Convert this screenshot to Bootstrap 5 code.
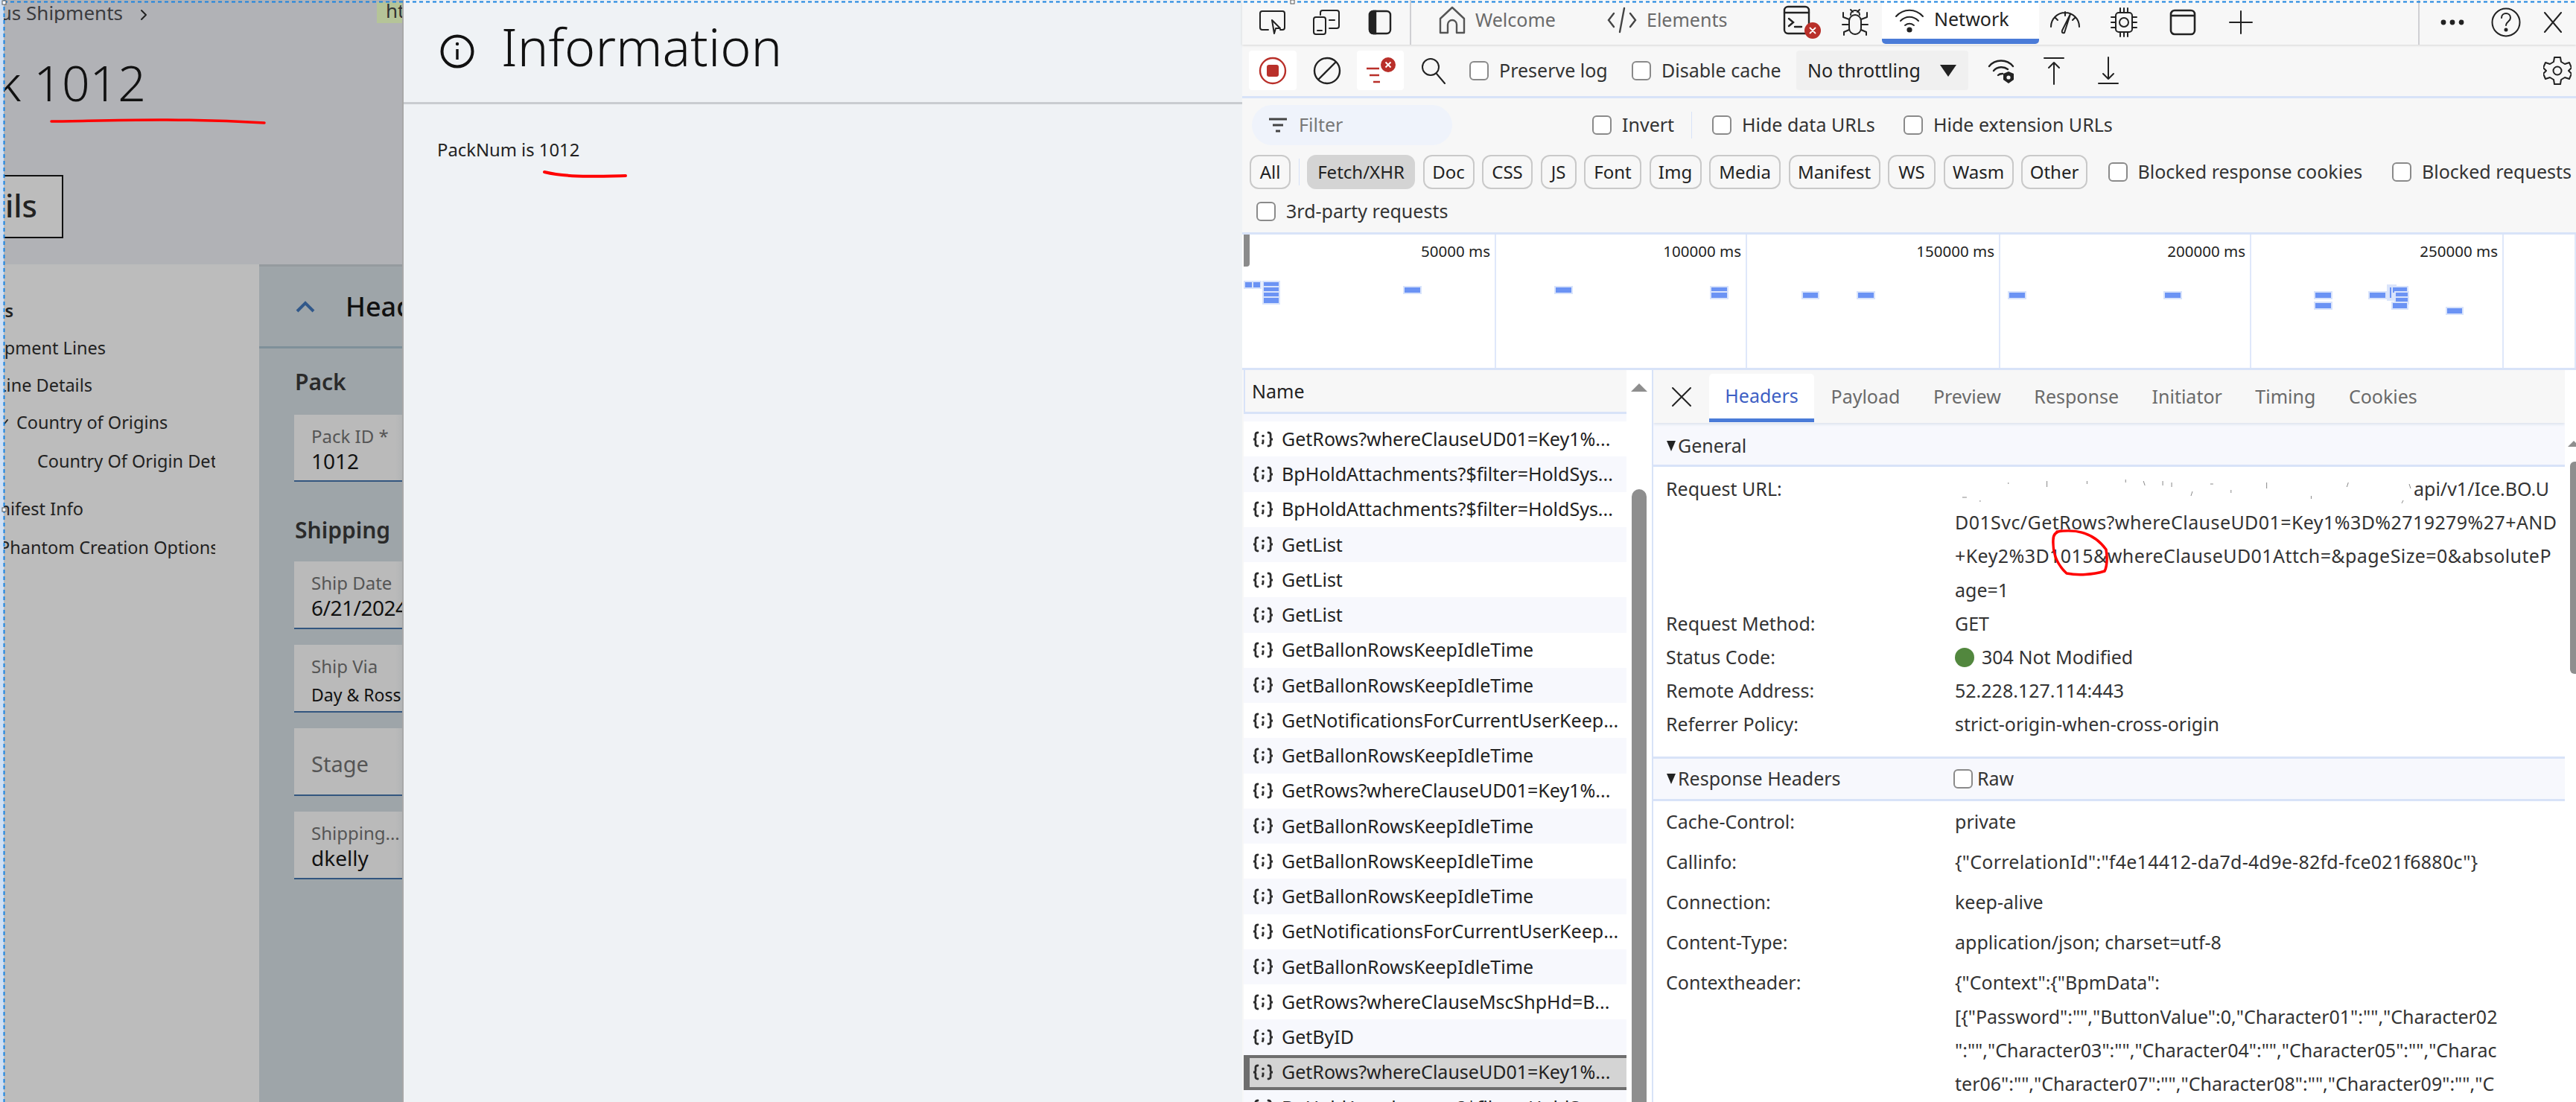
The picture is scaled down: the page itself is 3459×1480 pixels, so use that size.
<!DOCTYPE html>
<html lang="en">
<head>
<meta charset="UTF-8" />
<title>Pack 1012 - Network</title>
<link href="https://cdn.jsdelivr.net/npm/bootstrap@5.3.0/dist/css/bootstrap.min.css" rel="stylesheet" />
<style>
  html, body { height: 100%; }
  body { width: 3459px; height: 1480px; overflow: hidden; position: relative; font-family: "Noto Sans", sans-serif; font-size: 25px; color: #222; background: #f7f7f7; }
  svg { display: block; flex: none; }
  .ico { fill: none; stroke: #222; stroke-width: 2; stroke-linecap: round; stroke-linejoin: round; }
  .defs-svg { position: absolute; }

  /* left app pane */
  .app-pane { width: 540px; flex: none; background: #b1b2b6; overflow: hidden; }
  .crumb-row { height: 34px; padding-top: 3px; }
  .crumb-txt { width: 165px; color: #3b3b3e; font-size: 26px; line-height: 28px; white-space: nowrap; justify-content: flex-end; overflow: hidden; }
  .crumb-chev { margin: 9px 0 0 23px; }
  .crumb-url { margin-left: auto; width: 34px; height: 28px; background: #b5c498; padding-left: 12px; line-height: 22px; font-size: 26px; overflow: hidden; color: #333; }
  .pack-title { width: 196px; margin-top: 36px; font-size: 66px; line-height: 80px; font-weight: 300; color: #111; justify-content: flex-end; white-space: nowrap; overflow: hidden; }
  .details-btn { margin: 85px 0 35px -60px; width: 145px; height: 85px; border: 2px solid #111; border-radius: 0; background: #bcbcbc; color: #222; font-size: 42px; font-weight: 500; line-height: 78px; justify-content: flex-end; padding: 0 33px 0 0; }
  .app-split { height: 1125px; }
  .side-tree { width: 348px; flex: none; background: #bcbcbc; font-size: 23.5px; color: #222; white-space: nowrap; overflow: hidden; padding-top: 47px; }
  .tree-item { height: 30px; line-height: 30px; overflow: hidden; width: 289px; }
  .tree-next { margin-top: 20px; }
  .tree-end { justify-content: flex-end; }
  .tree-s { width: 18px; }
  .tree-lines { width: 142px; }
  .tree-details { width: 124px; }
  .tree-origin { margin-left: 2px; }
  .tree-det { margin-top: 22px; padding-left: 50px; }
  .tree-info { width: 112px; margin-top: 34px; }
  .tree-phantom { margin-top: 22px; }
  .tree-phantom span { margin-left: -1px; display: inline-block; }
  .form-panel { flex: 1; background: #9ea5a9; border-top: 3px solid #959b9f; overflow: hidden; white-space: nowrap; }
  .form-head { height: 110px; border-bottom: 3px solid #7f9099; padding-left: 47px; font-size: 36px; font-weight: 500; color: #111; }
  .form-head svg { margin-right: 41px; margin-left: 2px; }
  .form-sec { font-size: 30px; font-weight: 600; color: #2a2a2a; padding-left: 48px; line-height: 40px; }
  .sec-pack { margin-top: 25px; margin-bottom: 24px; }
  .sec-ship { margin-bottom: 22px; }
  .form-field { margin-left: 47px; width: 160px; height: 91px; margin-bottom: 21px; padding: 14px 0 0 23px; background: linear-gradient(90deg, #bababa 85%, #a6abae); border-bottom: 2px solid #33567f; }
  .field-pack { margin-bottom: 45px; height: 90px; }
  .form-field label { display: block; font-size: 24px; line-height: 30px; color: #555; }
  .form-field div { font-size: 28px; line-height: 37px; color: #111; }
  .form-field .date-val { letter-spacing: -.5px; }
  .form-field .via { font-size: 23px; margin-top: 5px; }
  .form-field .stage { font-size: 29px; line-height: 68px; color: #555; }

  /* modal */
  .info-pane { width: 1128px; flex: none; background: #eff2f5; border-left: 2px solid #a8a8a8; }
  .info-head { height: 140px; border-bottom: 3px solid #c9ccd0; padding-left: 49px; font-size: 70px; font-weight: 300; color: #111; }
  .info-head svg { margin-right: 36px; }
  .info-head span { margin-top: -12px; }
  .info-body { padding: 45px 0 0 45px; font-size: 23.8px; line-height: 32px; color: #222; }

  /* devtools */
  .dev-pane { width: 1791px; flex: none; background: #f7f7f7; white-space: nowrap; }
  .tool-cell { display: flex; align-items: center; justify-content: center; }
  .top-bar { display: grid; height: 60px; padding-left: 5px; box-shadow: 0 1px 3px #d5d5d5; position: relative;
    grid-template-columns: 72px 72px 72px 4px 2px 250px 240px 70px 72px 211px 70px 88px 70px 86px 195px 2px 88px 56px 22px 44px; }
  .tb-sep { background: #cfcfd3; }
  .tb-tab { display: flex; align-items: center; gap: 13px; color: #6a6a6a; font-size: 25px; padding-bottom: 6px; }
  .tab-welcome { padding-left: 37px; }
  .tab-elements { padding-left: 13px; }
  .tb-tab.on { background: #fff; color: #222; border-bottom: 7px solid #4a7bd8; border-radius: 0 0 5px 5px; padding-bottom: 0; padding-left: 17px; margin-bottom: 1px; }
  .net-bar { display: grid; height: 72px; padding: 8px 0 8px 9px; border-bottom: 3px solid #d8e3f8;
    grid-template-columns: 64px 81px 63px 80px 226px 221px 231px 90px 50px 96px 1fr 50px; }
  .white-box { background: #fff; border-radius: 4px; }
  .chk-label { display: flex; align-items: center; gap: 14px; color: #333; margin: 0; }
  .chk-label .form-check-input { width: 26px; height: 26px; margin: 0; border: 2px solid #8a8a8a; border-radius: 6px; flex: none; background-color: #fff; }
  .throttle { background: #f0f0f0; border-radius: 4px; padding: 0 15px; justify-content: space-between; color: #222; }
  .filter-row { display: grid; height: 72px; padding-left: 13px; align-items: center;
    grid-template-columns: 269px 188px 133px 1px 27px 257px auto; }
  .filter-pill { height: 54px; background: #eff3fb; border-radius: 27px; padding-left: 22px; gap: 15px; color: #777; }
  .filter-sep { width: 1px; height: 36px; background: #d8e3f8; }
  .type-row { display: grid; height: 46px; margin-top: 4px; padding-left: 10px; column-gap: 10.5px; align-items: center;
    grid-template-columns: 55px 1px 145px 69px 68px 48px 77px 70px 96px 123px 64px 94px 89px 388px auto; }
  .type-chip { height: 46px; border: 2px solid #c9c9c9; border-radius: 12px; background: #f7f7f7; color: #222; font-size: 24px; padding: 0; line-height: 40px; }
  .type-chip.on { background: #d4d4d4; border-color: #d4d4d4; }
  .type-sep { height: 36px; background: #d8e3f8; }
  .pad-chk { padding-left: 17px; }
  .third-row { height: 58px; padding: 2px 0 0 19px; }
  .timeline { height: 185px; background: #fff; border-top: 3px solid #d8e3f8; border-bottom: 3px solid #d8e3f8; position: relative; display: grid; padding-left: 2px;
    grid-template-columns: 339px 337px 340px 337px 339px 1fr; }
  .tick { border-right: 2px solid #dfe8fa; text-align: right; padding: 7px 6px 0 0; font-size: 20.5px; line-height: 30px; color: #222; }
  .tick:last-child { border: 0; }
  .wf-bar { position: absolute; height: 7px; background: #6b93f4; box-shadow: 0 0 0 2px #d8e3fb; }
  .wf-mark { position: absolute; left: 1537px; top: 67px; width: 13px; height: 22px; background: #dbe5fb; }
  .wf-handle { position: absolute; left: 2px; top: 0; width: 8px; height: 43px; background: #8b8b8b; border-radius: 0 0 4px 0; }
  .lower { height: 983px; padding-left: 2px; }
  .name-col { width: 514px; flex: none; overflow: hidden; }
  .name-head { height: 59px; background: #f7f7f7; border-left: 2px solid #d8e3f8; border-bottom: 3px solid #d8e3f8; padding: 2px 0 0 9px; font-size: 25px; }
  .req-list { border-radius: 0; }
  .req-row { height: 47.25px; flex: none; padding: 0 0 0 11px; gap: 10px; border: 0; background: #fff; color: #222; font-size: 25px; display: flex; align-items: center; }
  .req-row:nth-child(odd) { background: #f7f8fd; }
  .req-row.req-cut { height: 10px; overflow: hidden; align-items: flex-end; }
  .req-cut span { display: block; height: 47px; line-height: 38px; margin-left: 40px; }
  .req-row.sel { background: #d4d4d4; border: 4px solid #6e6e6e; border-right: 0; border-left-width: 8px; padding-left: 3px; }
  .bar-col { width: 34px; flex: none; background: #fff; position: relative; }
  .bar-up { position: absolute; left: 6px; top: 18px; width: 0; height: 0; border: 11px solid transparent; border-top: 0; border-bottom-color: #8e8e8e; }
  .bar-thumb { position: absolute; left: 7px; top: 160px; bottom: 0; width: 20px; background: #8e8e8e; border-radius: 10px 10px 0 0; }
  .detail-col { width: 1226px; flex: none; border-left: 2px solid #d8e3f8; background: #fff; overflow: hidden; }
  .detail-tabs { height: 71px; background: #f7f7f7; box-shadow: 0 2px 3px #dbe1ee; padding-left: 0; gap: 44.5px; color: #6a6a6a; position: relative; }
  .close-cell { width: 75px; margin-right: -44.5px; }
  .tab-on { width: 141px; height: 65px; margin: 3px -22px 0 0; background: #fff; border-radius: 5px 5px 0 0; border-bottom: 5px solid #4a7bd8; color: #3d5fc4; }
  .sec-head { height: 57px; padding: 4px 0 0 18px; background: #f7f8fd; border-bottom: 3px solid #d8e3f8; color: #333; margin-top: 2px; }
  .sec-head svg { margin-right: 3px; }
  .sec-head.two { height: 60px; padding-top: 0; border-top: 3px solid #d8e3f8; margin-top: 20px; }
  .sec-raw { width: 370px; }
  .raw-lbl { gap: 6px; }
  .kv { display: grid; grid-template-columns: 388px 1fr; padding-left: 17px; line-height: 45.2px; color: #333; white-space: nowrap; }
  .kv-wrap { padding-top: 7px; }
  .kv-wrap2 { padding-top: 5px; }
  .kv-wrap2 .kv { margin-bottom: 9px; }
  .url-val { letter-spacing: .42px; }
  .corr-val { letter-spacing: .25px; }
  .dot-ok { width: 26px; height: 26px; border-radius: 50%; background: #52873e; margin-right: 10px; }
  .outer-scroll { flex: 1; background: #fff; position: relative; }
  .outer-thumb { position: absolute; left: 7px; top: 123px; height: 285px; right: 0; background: #8e8e8e; border-radius: 6px 0 0 6px; }
  .outer-up { position: absolute; left: 4px; top: 95px; width: 0; height: 0; border: 8px solid transparent; border-top: 0; border-bottom-color: #8e8e8e; }
  .markup { position: absolute; left: 0; top: 0; pointer-events: none; z-index: 5; }
</style>
</head>
<body class="d-flex">
<svg width="0" height="0" class="defs-svg">
  <symbol id="i-json" viewBox="0 0 30 22">
    <path d="M8 2C4 2 5 5 5 8S4 11 2 11c2 0 3 0 3 3s-1 6 3 6M22 2c4 0 3 3 3 6s1 3 3 3c-2 0-3 0-3 3s1 6-3 6" fill="none" stroke="#2b2b2b" stroke-width="2.8" stroke-linecap="round"/>
    <circle cx="15" cy="6.5" r="1.8" fill="#2b2b2b"/><path d="M15 11.5v3.5l-1 2.5" fill="none" stroke="#2b2b2b" stroke-width="2.8"/>
  </symbol>
  <symbol id="i-wifi" viewBox="0 0 40 36">
    <path d="M2 14C12 3 28 3 38 14M8 20c7-7 17-7 24 0M14 26c4-3 8-3 12 0" class="ico" fill="none" stroke-width="2.6"/>
    <circle cx="20" cy="32" r="3.6" fill="#222"/>
  </symbol>
</svg>

<!-- app behind the dialog -->
<div class="app-pane d-flex flex-column">
  <div class="crumb-row d-flex align-items-start">
    <div class="crumb-txt d-flex">Previous Shipments</div>
    <svg class="ico crumb-chev" width="10" height="16" viewBox="0 0 10 16"><path d="M2 2l6 6-6 6"/></svg>
    <div class="crumb-url">https</div>
  </div>
  <div class="pack-title d-flex">Pack 1012</div>
  <div class="btn details-btn d-flex">Details</div>
  <div class="app-split d-flex">
    <div class="side-tree">
      <div class="tree-item d-flex tree-end fw-semibold tree-s">s</div>
      <div class="tree-item d-flex tree-end tree-next tree-lines">Shipment Lines</div>
      <div class="tree-item d-flex tree-end tree-next tree-details">Line Details</div>
      <div class="tree-item d-flex align-items-center gap-2 tree-next">
        <svg class="ico" width="12" height="10" viewBox="0 0 12 10"><path d="M2 2l4 5 4-5"/></svg>
        <span class="tree-origin">Country of Origins</span>
      </div>
      <div class="tree-item tree-det">Country Of Origin Details</div>
      <div class="tree-item d-flex tree-end tree-info">Manifest Info</div>
      <div class="tree-item tree-phantom"><span>Phantom Creation Options</span></div>
    </div>
    <div class="form-panel">
      <div class="form-head d-flex align-items-center">
        <svg width="26" height="16" viewBox="0 0 26 16" fill="none" stroke="#31588a" stroke-width="4"><path d="M2 14L13 3l11 11"/></svg>
        <span>Header</span>
      </div>
      <div class="form-sec sec-pack">Pack</div>
      <div class="form-field field-pack"><label>Pack ID *</label><div>1012</div></div>
      <div class="form-sec sec-ship">Shipping</div>
      <div class="form-field"><label>Ship Date</label><div class="date-val">6/21/2024</div></div>
      <div class="form-field"><label>Ship Via</label><div class="via">Day &amp; Ross</div></div>
      <div class="form-field"><div class="stage">Stage</div></div>
      <div class="form-field"><label>Shipping...</label><div>dkelly</div></div>
    </div>
  </div>
</div>

<!-- information dialog -->
<div class="info-pane">
  <div class="info-head d-flex align-items-center">
    <svg width="46" height="46" viewBox="0 0 46 46" fill="none" stroke="#111" stroke-width="4"><circle cx="23" cy="23" r="20.5"/><path d="M23 20v14" stroke-width="3.4"/><circle cx="23" cy="13" r="2.2" fill="#111" stroke="none"/></svg>
    <span>Information</span>
  </div>
  <div class="info-body">PackNum is 1012</div>
</div>

<!-- devtools -->
<div class="dev-pane d-flex flex-column">
  <div class="top-bar">
    <div class="tool-cell"><svg class="ico" width="38" height="34" viewBox="0 0 38 34"><path d="M13 27H5a3 3 0 0 1-3-3V5a3 3 0 0 1 3-3h27a3 3 0 0 1 3 3v19a3 3 0 0 1-3 3h-3"/><path d="M18 14l11 11h-6l-2 7z"/></svg></div>
    <div class="tool-cell"><svg class="ico" width="36" height="34" viewBox="0 0 36 34"><path d="M10 7V4a3 3 0 0 1 3-3h19a3 3 0 0 1 3 3v18a3 3 0 0 1-3 3H22"/><rect x="1" y="10" width="16" height="23" rx="3"/><path d="M6 28h6M22 14h7" /></svg></div>
    <div class="tool-cell"><svg width="32" height="34" viewBox="0 0 32 34" fill="none" stroke="#222" stroke-width="2.4"><rect x="2" y="2" width="28" height="30" rx="5"/><path d="M2 7a5 5 0 0 1 5-5h3v30H7a5 5 0 0 1-5-5z" fill="#222"/></svg></div>
    <div></div><div class="tb-sep"></div>
    <div class="tb-tab tab-welcome">
      <svg width="36" height="38" viewBox="0 0 36 38" fill="none" stroke="#555" stroke-width="2.4" stroke-linejoin="round"><path d="M18 2L2 17v19h10V25a6 6 0 0 1 12 0v11h10V17z"/></svg>
      <span>Welcome</span>
    </div>
    <div class="tb-tab tab-elements">
      <svg width="40" height="36" viewBox="0 0 40 36" fill="none" stroke="#444" stroke-width="2.4" stroke-linecap="round"><path d="M9 9l-7 9 7 9M31 9l7 9-7 9M23 2l-6 32"/></svg>
      <span>Elements</span>
    </div>
    <div class="tool-cell"><svg width="52" height="46" viewBox="0 0 52 46" fill="none" stroke="#222" stroke-width="2.4" stroke-linecap="round"><rect x="2" y="2" width="33" height="36" rx="5"/><path d="M2 10h33M8 18l6 5-6 5M16 29h9"/><circle cx="40" cy="34" r="11" fill="#b9302a" stroke="none"/><path d="M36.5 30.5l7 7M43.5 30.5l-7 7" stroke="#fff" stroke-width="1.8"/></svg></div>
    <div class="tool-cell"><svg class="ico" width="38" height="38" viewBox="0 0 38 38"><rect x="11" y="9" width="16" height="26" rx="8"/><path d="M13 9c0-8 12-8 12 0M13 2l3 3M25 2l-3 3M11 15L3 12V6M27 15l8-3V6M11 22H2M27 22h9M11 29l-7 3v4M27 29l7 3v4"/></svg></div>
    <div class="tb-tab on">
      <svg width="40" height="36"><use href="#i-wifi"/></svg>
      <span>Network</span>
    </div>
    <div class="tool-cell"><svg class="ico" width="44" height="32" viewBox="0 0 44 32"><path d="M3 22A19 19 0 0 1 41 22M8 9l4 4M22 2v5M36 9l-4 4"/><path d="M29 5L21 30q-4 1-3-3z"/></svg></div>
    <div class="tool-cell"><svg class="ico" width="36" height="40" viewBox="0 0 36 40"><rect x="7" y="7" width="22" height="26" rx="4"/><circle cx="18" cy="20" r="6"/><path d="M13 1v5M18 1v5M23 1v5M13 34v5M18 34v5M23 34v5M1 13h5M1 20h5M1 27h5M30 13h5M30 20h5M30 27h5"/></svg></div>
    <div class="tool-cell"><svg width="36" height="36" viewBox="0 0 36 36" fill="none" stroke="#222" stroke-width="2.6"><rect x="2" y="2" width="32" height="32" rx="5"/><path d="M2 9h32"/></svg></div>
    <div class="tool-cell"><svg class="ico" width="32" height="32" viewBox="0 0 32 32"><path d="M16 1v30M1 16h30"/></svg></div>
    <div></div>
    <div class="tb-sep"></div>
    <div class="tool-cell"><svg width="32" height="8" viewBox="0 0 32 8" fill="#222"><circle cx="4" cy="4" r="3.4"/><circle cx="16" cy="4" r="3.4"/><circle cx="28" cy="4" r="3.4"/></svg></div>
    <div class="tool-cell"><svg width="40" height="40" viewBox="0 0 40 40" fill="none" stroke="#222" stroke-width="2" stroke-linecap="round"><circle cx="20" cy="20" r="18.5"/><path d="M14 14c0-8 12-8 12 0 0 5-6 5-6 10"/><circle cx="20" cy="30" r="1.5" fill="#222"/></svg></div>
    <div></div>
    <div class="tool-cell justify-content-start"><svg class="ico" width="26" height="28" viewBox="0 0 26 28"><path d="M2 1l22 26M24 1L2 27"/></svg></div>
  </div>

  <div class="net-bar">
    <div class="tool-cell white-box"><svg width="38" height="38" viewBox="0 0 38 38"><circle cx="19" cy="19" r="17" fill="none" stroke="#b9302a" stroke-width="2.4"/><rect x="11" y="11" width="16" height="16" rx="3" fill="#b9302a"/></svg></div>
    <div class="tool-cell"><svg width="38" height="38" viewBox="0 0 38 38" fill="none" stroke="#222" stroke-width="2.4"><circle cx="19" cy="19" r="17"/><path d="M31 7L7 31"/></svg></div>
    <div class="tool-cell white-box"><svg width="42" height="36" viewBox="0 0 42 36" fill="none" stroke="#b9302a" stroke-width="2.6"><path d="M2 15h17M6 24h13M11 33h9"/><circle cx="31" cy="10" r="10" fill="#b9302a" stroke="none"/><path d="M27.5 6.500l7 7M34.500 6.500l-7 7" stroke="#fff" stroke-width="2"/></svg></div>
    <div class="tool-cell"><svg class="ico" width="34" height="36" viewBox="0 0 34 36"><circle cx="13" cy="13" r="11"/><path d="M21 22l11 13"/></svg></div>
    <div class="d-flex align-items-center ps-2"><label class="chk-label"><input class="form-check-input" type="checkbox" />Preserve log</label></div>
    <div class="d-flex align-items-center"><label class="chk-label"><input class="form-check-input" type="checkbox" />Disable cache</label></div>
    <div class="throttle d-flex align-items-center"><span>No throttling</span><svg width="24" height="18" viewBox="0 0 24 18" fill="#222"><path d="M1 1h22L12 17z"/></svg></div>
    <div class="tool-cell"><svg width="38" height="38" viewBox="0 0 38 38" fill="none"><path d="M2 13C10 3 26 3 34 13M8 19c5-6 14-6 19-2M14 25c2-2 4-2 6-2" stroke="#222" stroke-width="2.4" stroke-linecap="round"/><path d="M28 20l7 3v8l-7 5-7-5v-8z" fill="#222"/><circle cx="28" cy="28" r="2.600" fill="#f7f7f7"/></svg></div>
    <div class="tool-cell"><svg class="ico" width="28" height="38" viewBox="0 0 28 38"><path d="M1 2h26M14 8v29M7 15l7-7 7 7"/></svg></div>
    <div class="tool-cell"><svg class="ico" width="28" height="38" viewBox="0 0 28 38"><path d="M1 36h26M14 1v29M7 23l7 7 7-7"/></svg></div>
    <div></div>
    <div class="tool-cell"><svg class="ico" width="38" height="40" viewBox="0 0 38 40"><path d="M15 2h8l1 6 5 3 6-2 3 7-4 4 0 0 4 4-3 7-6-2-5 3-1 6h-8l-1-6-5-3-6 2-3-7 4-4-4-4 3-7 6 2 5-3z" /><circle cx="19" cy="20" r="5.500"/></svg></div>
  </div>

  <div class="filter-row">
    <div class="filter-pill d-flex align-items-center">
      <svg width="26" height="20" viewBox="0 0 26 20" fill="none" stroke="#444" stroke-width="3"><path d="M1 2h24M6 10h14M10 18h6"/></svg>
      <span>Filter</span>
    </div>
    <div></div>
    <label class="chk-label">
      <input class="form-check-input" type="checkbox" />Invert</label>
    <div class="filter-sep"></div>
    <div></div>
    <label class="chk-label"><input class="form-check-input" type="checkbox" />Hide data URLs</label>
    <label class="chk-label"><input class="form-check-input" type="checkbox" />Hide extension URLs</label>
  </div>

  <div class="type-row">
    <button class="btn type-chip">All</button>
    <div class="type-sep"></div>
    <button class="btn type-chip on">Fetch/XHR</button>
    <button class="btn type-chip">Doc</button>
    <button class="btn type-chip">CSS</button>
    <button class="btn type-chip">JS</button>
    <button class="btn type-chip">Font</button>
    <button class="btn type-chip">Img</button>
    <button class="btn type-chip">Media</button>
    <button class="btn type-chip">Manifest</button>
    <button class="btn type-chip">WS</button>
    <button class="btn type-chip">Wasm</button>
    <button class="btn type-chip">Other</button>
    <label class="chk-label pad-chk"><input class="form-check-input" type="checkbox" />Blocked response cookies</label>
    <label class="chk-label"><input class="form-check-input" type="checkbox" />Blocked requests</label>
  </div>

  <div class="third-row d-flex align-items-center">
    <label class="chk-label"><input class="form-check-input" type="checkbox" />3rd-party requests</label>
  </div>

  <div class="timeline">
    <div class="tick">50000 ms</div>
    <div class="tick">100000 ms</div>
    <div class="tick">150000 ms</div>
    <div class="tick">200000 ms</div>
    <div class="tick">250000 ms</div>
    <div class="tick"></div>
    <div class="wf-handle"></div>
    <div class="wf-mark"></div>
    <span class="wf-bar" style="left:4px;top:64px;width:9px"></span>
    <span class="wf-bar" style="left:15px;top:64px;width:9px"></span>
    <span class="wf-bar" style="left:29px;top:64px;width:20px"></span>
    <span class="wf-bar" style="left:29px;top:71px;width:20px"></span>
    <span class="wf-bar" style="left:29px;top:78px;width:20px"></span>
    <span class="wf-bar" style="left:29px;top:85px;width:20px"></span>
    <span class="wf-bar" style="left:218px;top:71px;width:21px"></span>
    <span class="wf-bar" style="left:421px;top:71px;width:21px"></span>
    <span class="wf-bar" style="left:630px;top:71px;width:21px"></span>
    <span class="wf-bar" style="left:630px;top:78px;width:21px"></span>
    <span class="wf-bar" style="left:753px;top:78px;width:20px"></span>
    <span class="wf-bar" style="left:827px;top:78px;width:21px"></span>
    <span class="wf-bar" style="left:1030px;top:78px;width:21px"></span>
    <span class="wf-bar" style="left:1239px;top:78px;width:21px"></span>
    <span class="wf-bar" style="left:1441px;top:78px;width:21px"></span>
    <span class="wf-bar" style="left:1441px;top:92px;width:21px"></span>
    <span class="wf-bar" style="left:1514px;top:78px;width:21px"></span>
    <span class="wf-bar" style="left:1545px;top:71px;width:19px"></span>
    <span class="wf-bar" style="left:1549px;top:78px;width:16px"></span>
    <span class="wf-bar" style="left:1549px;top:85px;width:16px"></span>
    <span class="wf-bar" style="left:1545px;top:92px;width:19px"></span>
    <span class="wf-bar" style="left:1618px;top:99px;width:20px"></span>
    <span class="wf-bar" style="left:1541px;top:71px;width:2px;height:14px"></span>
  </div>

  <div class="lower d-flex">
    <div class="name-col">
      <div class="name-head d-flex align-items-center">Name</div>
      <div class="list-group req-list">
        <div class="list-group-item req-row req-cut"><span>GetByID</span></div>
        <div class="list-group-item req-row"><svg width="30" height="22"><use href="#i-json"/></svg>GetRows?whereClauseUD01=Key1%...</div>
        <div class="list-group-item req-row"><svg width="30" height="22"><use href="#i-json"/></svg>BpHoldAttachments?$filter=HoldSys...</div>
        <div class="list-group-item req-row"><svg width="30" height="22"><use href="#i-json"/></svg>BpHoldAttachments?$filter=HoldSys...</div>
        <div class="list-group-item req-row"><svg width="30" height="22"><use href="#i-json"/></svg>GetList</div>
        <div class="list-group-item req-row"><svg width="30" height="22"><use href="#i-json"/></svg>GetList</div>
        <div class="list-group-item req-row"><svg width="30" height="22"><use href="#i-json"/></svg>GetList</div>
        <div class="list-group-item req-row"><svg width="30" height="22"><use href="#i-json"/></svg>GetBallonRowsKeepIdleTime</div>
        <div class="list-group-item req-row"><svg width="30" height="22"><use href="#i-json"/></svg>GetBallonRowsKeepIdleTime</div>
        <div class="list-group-item req-row"><svg width="30" height="22"><use href="#i-json"/></svg>GetNotificationsForCurrentUserKeep...</div>
        <div class="list-group-item req-row"><svg width="30" height="22"><use href="#i-json"/></svg>GetBallonRowsKeepIdleTime</div>
        <div class="list-group-item req-row"><svg width="30" height="22"><use href="#i-json"/></svg>GetRows?whereClauseUD01=Key1%...</div>
        <div class="list-group-item req-row"><svg width="30" height="22"><use href="#i-json"/></svg>GetBallonRowsKeepIdleTime</div>
        <div class="list-group-item req-row"><svg width="30" height="22"><use href="#i-json"/></svg>GetBallonRowsKeepIdleTime</div>
        <div class="list-group-item req-row"><svg width="30" height="22"><use href="#i-json"/></svg>GetBallonRowsKeepIdleTime</div>
        <div class="list-group-item req-row"><svg width="30" height="22"><use href="#i-json"/></svg>GetNotificationsForCurrentUserKeep...</div>
        <div class="list-group-item req-row"><svg width="30" height="22"><use href="#i-json"/></svg>GetBallonRowsKeepIdleTime</div>
        <div class="list-group-item req-row"><svg width="30" height="22"><use href="#i-json"/></svg>GetRows?whereClauseMscShpHd=B...</div>
        <div class="list-group-item req-row"><svg width="30" height="22"><use href="#i-json"/></svg>GetByID</div>
        <div class="list-group-item req-row sel"><svg width="30" height="22"><use href="#i-json"/></svg>GetRows?whereClauseUD01=Key1%...</div>
        <div class="list-group-item req-row"><svg width="30" height="22"><use href="#i-json"/></svg>BpHoldAttachments?$filter=HoldS</div>
      </div>
    </div>
    <div class="bar-col"><span class="bar-up"></span><span class="bar-thumb"></span></div>
    <div class="detail-col">
      <div class="detail-tabs d-flex align-items-center">
        <div class="tool-cell close-cell"><svg class="ico" width="28" height="28" viewBox="0 0 28 28"><path d="M2 2l24 24M26 2L2 26"/></svg></div>
        <div class="tool-cell tab-on">Headers</div>
        <span>Payload</span><span>Preview</span><span>Response</span><span>Initiator</span><span>Timing</span><span>Cookies</span>
      </div>
      <div class="sec-head d-flex align-items-center">
        <svg width="12" height="14" viewBox="0 0 12 14" fill="#222"><path d="M0 0h12L6 14z"/></svg>General
      </div>
      <div class="kv-wrap">
        <div class="kv">
          <div>Request URL:</div>
          <div>
            <div class="d-flex">
              <svg width="616" height="45" viewBox="0 0 618 45" fill="none" stroke="#888" stroke-width="1"><path d="M10 34h6M34 38v2M72 14v2M124 12v8M178 12v4M230 10v4M254 12l2 6M280 12v6M292 14v6M320 26l-2 6M344 16h4M372 24v4M420 14v8M480 32v4M530 14l-2 6M612 16l2 6M604 38l-2 4"/></svg>
              <span>api/v1/Ice.BO.U</span>
            </div>
            <div class="url-val">D01Svc/GetRows?whereClauseUD01=Key1%3D%2719279%27+AND</div>
            <div class="url-val">+Key2%3D1015&amp;whereClauseUD01Attch=&amp;pageSize=0&amp;absoluteP</div>
            <div>age=1</div>
          </div>
        </div>
        <div class="kv"><div>Request Method:</div><div>GET</div></div>
        <div class="kv"><div>Status Code:</div><div class="d-flex align-items-center"><span class="dot-ok"></span>304 Not Modified</div></div>
        <div class="kv"><div>Remote Address:</div><div>52.228.127.114:443</div></div>
        <div class="kv"><div>Referrer Policy:</div><div>strict-origin-when-cross-origin</div></div>
      </div>
      <div class="sec-head two d-flex align-items-center">
        <svg width="12" height="14" viewBox="0 0 12 14" fill="#222"><path d="M0 0h12L6 14z"/></svg>
        <div class="sec-raw">Response Headers</div>
        <label class="chk-label raw-lbl"><input class="form-check-input" type="checkbox" />Raw</label>
      </div>
      <div class="kv-wrap2">
        <div class="kv"><div>Cache-Control:</div><div>private</div></div>
        <div class="kv"><div>Callinfo:</div><div class="corr-val">{"CorrelationId":"f4e14412-da7d-4d9e-82fd-fce021f6880c"}</div></div>
        <div class="kv"><div>Connection:</div><div>keep-alive</div></div>
        <div class="kv"><div>Content-Type:</div><div>application/json; charset=utf-8</div></div>
        <div class="kv"><div>Contextheader:</div><div>{"Context":{"BpmData":<br />[{"Password":"","ButtonValue":0,"Character01":"","Character02<br />":"","Character03":"","Character04":"","Character05":"","Charac<br />ter06":"","Character07":"","Character08":"","Character09":"","C</div></div>
      </div>
    </div>
    <div class="outer-scroll"><span class="outer-up"></span><span class="outer-thumb"></span></div>
  </div>
</div>

<!-- red pen marks and the capture marquee, drawn on top -->
<svg class="markup" width="3459" height="1480" viewBox="0 0 3459 1480" fill="none">
  <rect x="0" y="0" width="5" height="1480" fill="#cfe0f5"/>
  <path d="M5 2.500H3459" stroke="#1a83e0" stroke-width="2" stroke-dasharray="5 4"/>
  <path d="M5.500 0V1480" stroke="#1a83e0" stroke-width="2" stroke-dasharray="5 4"/>
  <rect x="3" y="1" width="5" height="5" fill="#fff" stroke="#555"/>
  <rect x="3" y="682" width="5" height="5" fill="#fff" stroke="#555"/>
  <rect x="1733" y="0" width="5" height="5" fill="#fff" stroke="#555"/>
  <path d="M69 163C150 162 230 158 355 165" stroke="#f00" stroke-width="3.500" stroke-linecap="round"/>
  <path d="M731 231C760 238 790 237 840 236" stroke="#f00" stroke-width="4" stroke-linecap="round"/>
  <path d="M2762 714C2790 710 2812 716 2828 738C2830 750 2829 762 2826 767C2810 772 2790 773 2775 770C2764 760 2756 745 2757 725C2757 718 2760 714 2768 713" stroke="#f00" stroke-width="3.500" stroke-linecap="round"/>
</svg>
<script src="https://cdn.jsdelivr.net/npm/bootstrap@5.3.0/dist/js/bootstrap.bundle.min.js"></script>
</body>
</html>
